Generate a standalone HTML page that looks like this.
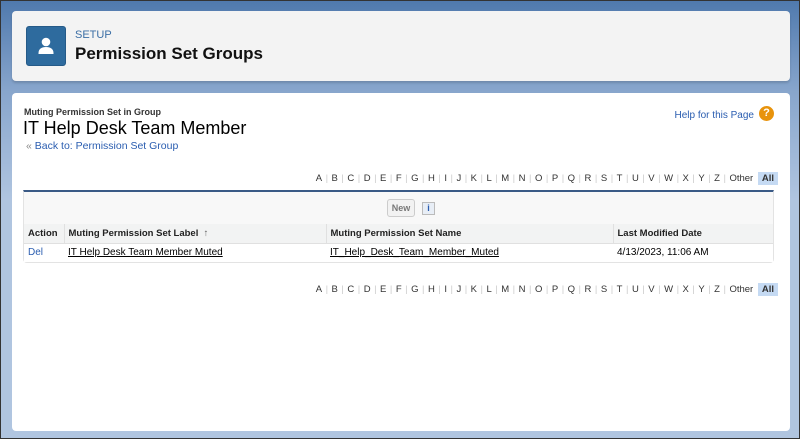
<!DOCTYPE html><html><head><style>
*{margin:0;padding:0;box-sizing:border-box}
body{width:800px;height:439px;overflow:hidden;font-family:"Liberation Sans",Arial,sans-serif;background:linear-gradient(#4f79ad 0px,#87a5cc 90px,#b0c5e0 200px,#b0c5e0);border:1px solid #333;position:relative}
.hdr{position:absolute;left:11px;top:10px;width:778px;height:70px;background:#f3f3f3;border-radius:4px;box-shadow:0 2px 2px rgba(0,0,0,.15)}
.ico{position:absolute;left:14px;top:15px;width:40px;height:40px;background:#2e6b9e;border-radius:3px;border:1px solid #255a88}
.setup{position:absolute;left:63px;top:18px;font-size:11px;color:#3b6ea5}
.pt{position:absolute;left:63px;top:33px;font-size:17px;font-weight:bold;color:#111}
.main{position:absolute;left:11px;top:92px;width:778px;height:338px;background:#fff;border-radius:4px}
.sub{position:absolute;left:12px;top:14px;font-size:9px;font-weight:bold;color:#333}
.h1{position:absolute;left:11px;top:25px;font-size:18px;color:#000}
.back{position:absolute;left:14px;top:47px;font-size:10.5px;color:#2a5db0}
.back span{color:#888}
.help{position:absolute;right:36px;top:17px;font-size:10px;color:#2a5db0}
.q{position:absolute;right:16px;top:13px;width:15px;height:15px;border-radius:50%;background:#e8930c;color:#fff;font-size:11px;font-weight:bold;text-align:center;line-height:15px}
.alpha{position:absolute;right:12px;font-size:9.5px;color:#333;white-space:nowrap}
.alpha i{font-style:normal;color:#ccc;margin:0 3.5px}
.alpha b{background:#c5daf3;padding:1px 4px;margin-left:2px}
.tbl{position:absolute;left:11px;top:97px;width:751px;height:73px;background:#f8f8f8;border-top:2px solid #3a5a86;border-radius:0 0 4px 4px;border-left:1px solid #e3e3e3;border-right:1px solid #e3e3e3;border-bottom:1px solid #e3e3e3}
.btn{position:absolute;left:363px;top:7px;width:28px;height:18px;border:1px solid #ccc;border-radius:3px;background:#f2f2f2;font-size:9px;font-weight:bold;color:#777;text-align:center;line-height:16px}
.inf{position:absolute;left:398px;top:10px;width:13px;height:13px;border:1px solid #bbb;background:#e8eef6;font-size:9px;color:#2a5db0;font-weight:bold;text-align:center;line-height:11px}
table{position:absolute;left:0;top:32px;width:749px;border-collapse:collapse;font-size:10px}
th{background:#f2f3f3;text-align:left;height:19px;padding-left:4px;color:#222;border-right:1px solid #e0e0e0;border-bottom:1px solid #e0e0e0;font-size:9.5px}
td{background:#fff;height:19px;padding-left:4px;color:#000}
td u{color:#000}
</style></head><body>
<div class="hdr"><div class="ico"><svg width="38" height="38" viewBox="0 0 38 38"><circle cx="19" cy="15" r="4.3" fill="#fff"/><path d="M11.5 26c0-4 3-6 7.5-6s7.5 2 7.5 6v1h-15z" fill="#fff"/></svg></div><div class="setup">SETUP</div><div class="pt">Permission Set Groups</div></div>
<div class="main">
<div class="sub">Muting Permission Set in Group</div>
<div class="h1">IT Help Desk Team Member</div>
<div class="back"><span>«</span> Back to: Permission Set Group</div>
<div class="help">Help for this Page</div><div class="q">?</div>
<div class="alpha" style="top:80px">A<i>|</i>B<i>|</i>C<i>|</i>D<i>|</i>E<i>|</i>F<i>|</i>G<i>|</i>H<i>|</i>I<i>|</i>J<i>|</i>K<i>|</i>L<i>|</i>M<i>|</i>N<i>|</i>O<i>|</i>P<i>|</i>Q<i>|</i>R<i>|</i>S<i>|</i>T<i>|</i>U<i>|</i>V<i>|</i>W<i>|</i>X<i>|</i>Y<i>|</i>Z<i>|</i>Other <b>All</b></div>
<div class="tbl"><div class="btn">New</div><div class="inf">i</div>
<table><tr><th style="width:40px">Action</th><th style="width:262px">Muting Permission Set Label &nbsp;<span style="color:#666">↑</span></th><th style="width:287px">Muting Permission Set Name</th><th style="border-right:none">Last Modified Date</th></tr>
<tr><td style="color:#2a5db0">Del</td><td><u>IT Help Desk Team Member Muted</u></td><td><u>IT_Help_Desk_Team_Member_Muted</u></td><td>4/13/2023, 11:06 AM</td></tr></table></div>
<div class="alpha" style="top:191px">A<i>|</i>B<i>|</i>C<i>|</i>D<i>|</i>E<i>|</i>F<i>|</i>G<i>|</i>H<i>|</i>I<i>|</i>J<i>|</i>K<i>|</i>L<i>|</i>M<i>|</i>N<i>|</i>O<i>|</i>P<i>|</i>Q<i>|</i>R<i>|</i>S<i>|</i>T<i>|</i>U<i>|</i>V<i>|</i>W<i>|</i>X<i>|</i>Y<i>|</i>Z<i>|</i>Other <b>All</b></div>
</div>
</body></html>
